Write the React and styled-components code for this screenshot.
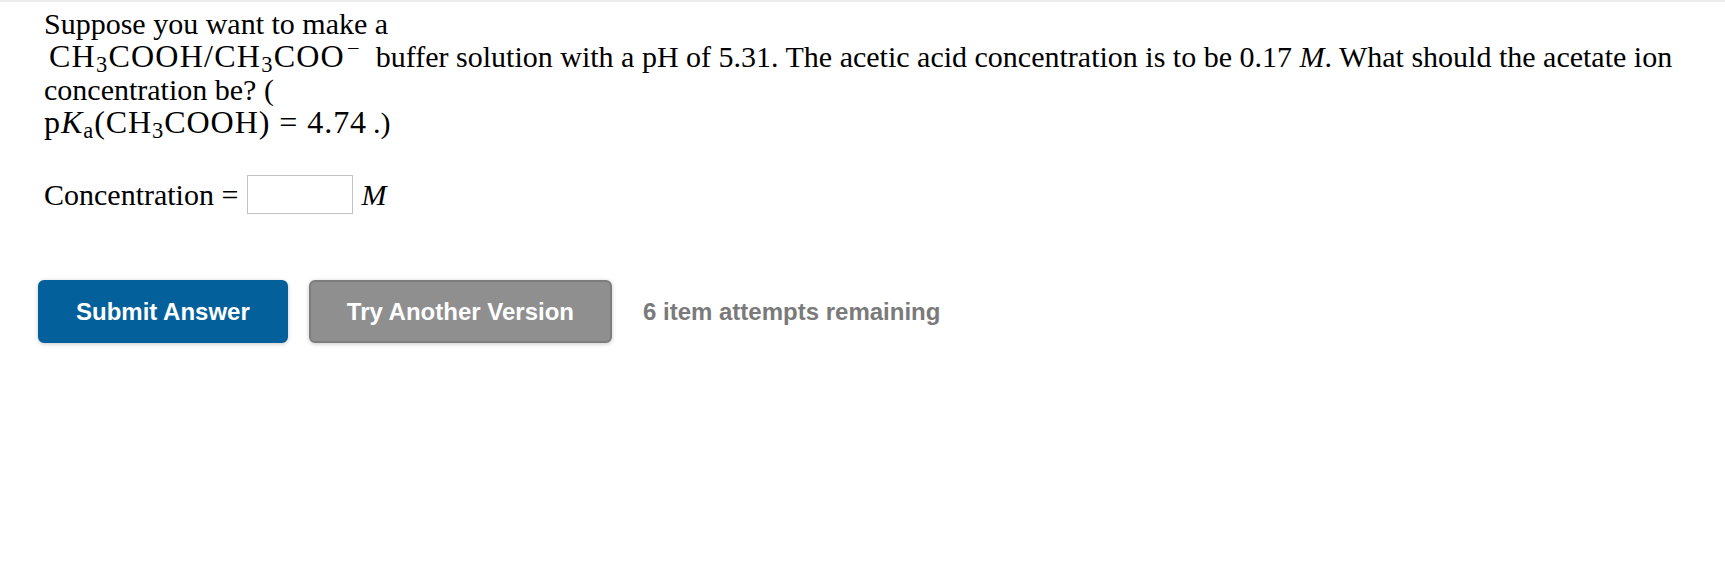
import styled, { createGlobalStyle } from "styled-components";

const GlobalStyle = createGlobalStyle`
  body {
    margin: 0;
    background: #fff;
  }
`;

export default function App() {
  return (
    <>
      <GlobalStyle />
      <Page>
        <Question>
          Suppose you want to make a
          <br />
          <Formula $lead>
            CH<Sub>3</Sub>COOH/CH<Sub>3</Sub>COO<Sup>−</Sup>
          </Formula>
          <Gap />
          buffer solution with a pH of 5.31. The acetic acid concentration is to
          be 0.17 <Var>M</Var>. What should the acetate ion
          <br />
          concentration be? (
          <br />
          <Formula $tight>
            p<Var>K</Var>
            <Sub>a</Sub>(CH<Sub>3</Sub>COOH)<Eq>=</Eq>4.74
          </Formula>
          <Dot>.)</Dot>
        </Question>
        <AnswerRow>
          <span>Concentration =</span>
          <AnswerInput type="text" />
          <Var>M</Var>
        </AnswerRow>
        <Actions>
          <Button $variant="primary">Submit Answer</Button>
          <Button $variant="secondary">Try Another Version</Button>
          <Remaining>6 item attempts remaining</Remaining>
        </Actions>
      </Page>
    </>
  );
}

const Page = styled.div`
  border-top: 2px solid #ececec;
  padding: 5px 38px 40px;
  min-height: 540px;
  box-sizing: border-box;
`;
const Question = styled.div`
  padding-left: 6px;
  font-family: "Liberation Serif", "Times New Roman", serif;
  font-size: 30px;
  line-height: 33px;
  color: #000;
`;
const Formula = styled.span`
  white-space: nowrap;
  font-size: 1.07em;
  line-height: 1;
  letter-spacing: ${(p) => (p.$tight ? "0.9px" : "1.2px")};
  margin-left: ${(p) => (p.$lead ? "5px" : "0")};
`;
const Sub = styled.span`
  font-size: 0.7em;
  vertical-align: -0.24em;
  line-height: 0;
`;
const Sup = styled.span`
  font-size: 0.7em;
  vertical-align: 0.5em;
  line-height: 0;
  margin-left: 2px;
`;
const Gap = styled.span`
  display: inline-block;
  width: 15px;
`;
const Var = styled.i`
  font-family: "Liberation Serif", "Times New Roman", serif;
`;
const Eq = styled.span`
  margin: 0 9px;
`;
const Dot = styled.span`
  margin-left: 6px;
`;
const AnswerRow = styled.div`
  display: flex;
  align-items: center;
  gap: 5px;
  margin-top: 36px;
  padding-left: 6px;
  font-family: "Liberation Serif", "Times New Roman", serif;
  font-size: 30px;
  color: #000;
`;
const AnswerInput = styled.input`
  width: 106px;
  height: 39px;
  box-sizing: border-box;
  border: 1px solid #c3c3c3;
  margin: 0 3px 0 4px;
  padding: 0 6px;
  font-size: 20px;
  outline: none;
`;
const Actions = styled.div`
  display: flex;
  align-items: center;
  gap: 21px;
  margin-top: 66px;
`;
const Button = styled.button`
  height: 63px;
  padding: 0 36px;
  border-radius: 6px;
  border: 2px solid ${(p) => (p.$variant === "primary" ? "#03609a" : "#7d7d7d")};
  background: ${(p) => (p.$variant === "primary" ? "#03609a" : "#8f8f8f")};
  color: #fff;
  font-family: "Liberation Sans", Arial, sans-serif;
  font-weight: bold;
  font-size: 24px;
  box-shadow: 0 1px 4px rgba(0, 0, 0, 0.22);
  cursor: pointer;
`;
const Remaining = styled.span`
  margin-left: 10px;
  font-family: "Liberation Sans", Arial, sans-serif;
  font-weight: bold;
  font-size: 24px;
  color: #7a7a7a;
`;
